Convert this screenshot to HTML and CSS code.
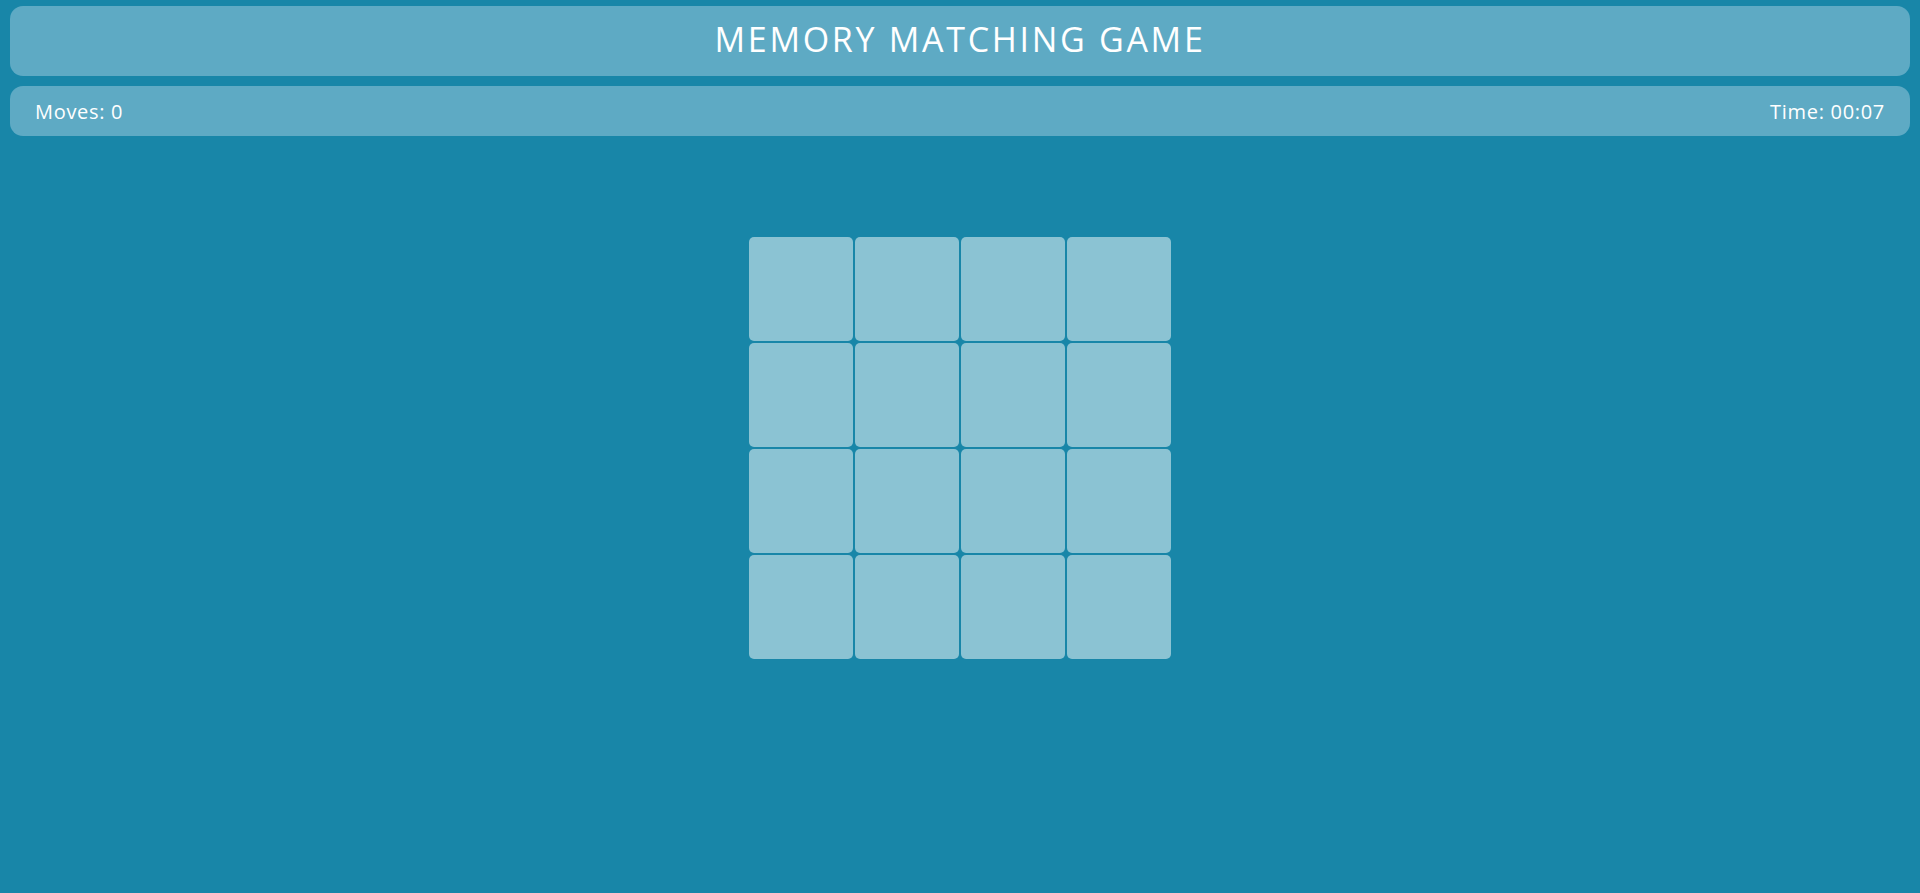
FILE: index.html
```html
<!DOCTYPE html>
<html lang="en">
<head>
<meta charset="utf-8">
<title>Memory Matching Game</title>
<link rel="stylesheet" href="styles.css">
</head>
<body>
<header class="title-bar"><h1 class="title">MEMORY MATCHING GAME</h1></header>
<section class="status-bar">
  <span class="moves">Moves: 0</span>
  <span class="timer">Time: 00:07</span>
</section>
<main class="board-wrap">
  <div class="board">
    <div class="card"></div><div class="card"></div><div class="card"></div><div class="card"></div>
    <div class="card"></div><div class="card"></div><div class="card"></div><div class="card"></div>
    <div class="card"></div><div class="card"></div><div class="card"></div><div class="card"></div>
    <div class="card"></div><div class="card"></div><div class="card"></div><div class="card"></div>
  </div>
</main>
</body>
</html>
```
FILE: styles.css
```css
* { box-sizing: border-box; }
html, body { height: 100%; }
body {
  margin: 0;
  padding: 6px 10px 0;
  background: #1886a8;
  color: #ffffff;
  font-family: "Open Sans", "DejaVu Sans", sans-serif;
}
.title-bar {
  height: 70px;
  background: #5eaac4;
  border-radius: 13px;
  display: flex;
  align-items: center;
  justify-content: center;
}
.title {
  margin: 0 0 4px;
  font-size: 34px;
  font-weight: 400;
  letter-spacing: 2.7px;
}
.status-bar {
  margin-top: 10px;
  height: 50px;
  background: #5eaac4;
  border-radius: 13px;
  display: flex;
  align-items: center;
  justify-content: space-between;
  padding: 0 25px;
  font-size: 20px;
  letter-spacing: 0.7px;
}
.board-wrap {
  display: flex;
  justify-content: center;
  padding-top: 101px;
}
.board {
  display: grid;
  grid-template-columns: repeat(4, 104px);
  grid-auto-rows: 104px;
  gap: 2px;
}
.card {
  background: #8bc3d3;
  border-radius: 5px;
}
```
